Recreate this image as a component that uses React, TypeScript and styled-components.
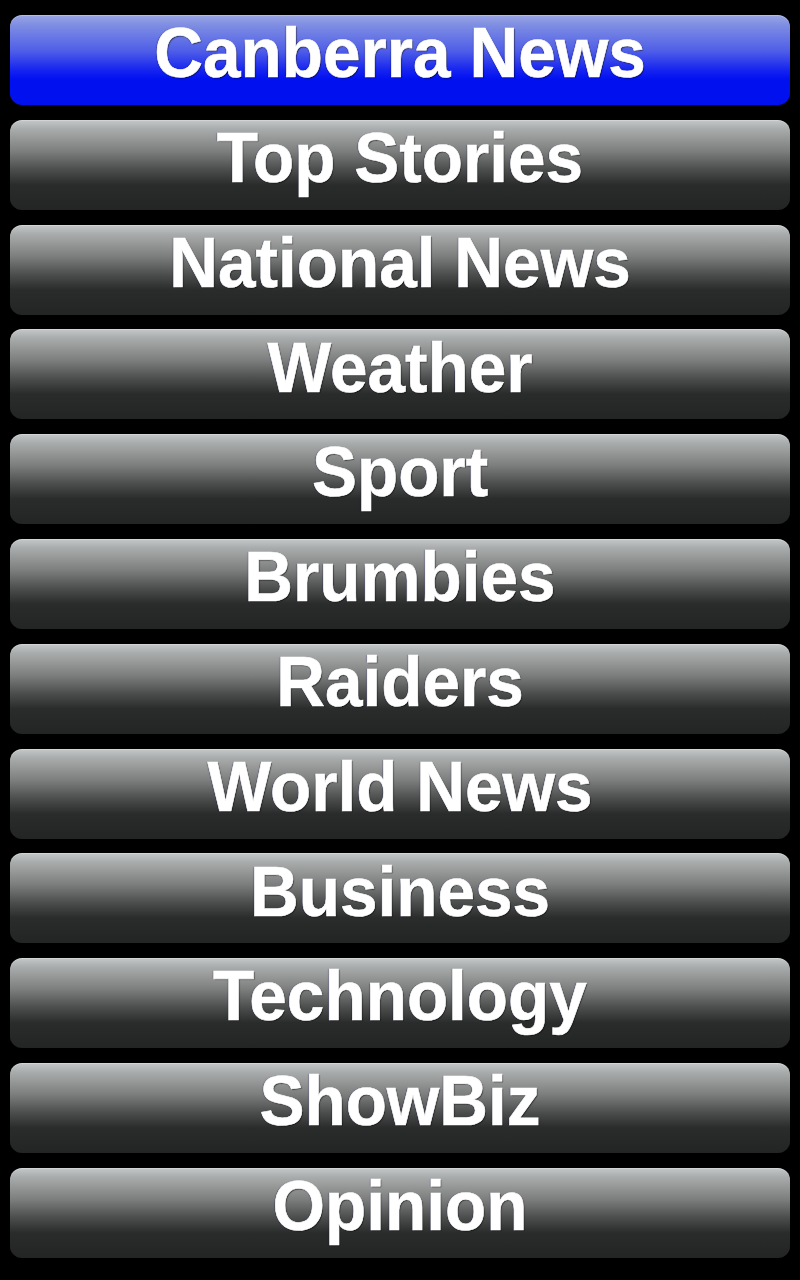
import React from "react";
import styled, { createGlobalStyle } from "styled-components";

const Global = createGlobalStyle`
  html, body {
    margin: 0;
    padding: 0;
    background: #000;
  }
  body {
    font-family: "Liberation Sans", Arial, sans-serif;
  }
`;

const Menu = styled.nav`
  display: grid;
  grid-template-columns: 1fr;
  grid-auto-rows: 90px;
  row-gap: 14.8px;
  padding: 15px 10px 22px 10px;
  background: #000;
  min-height: 1280px;
  box-sizing: border-box;
`;

const Button = styled.div<{ $active?: boolean }>`
  display: flex;
  align-items: center;
  justify-content: center;
  padding-bottom: 14px;
  box-sizing: border-box;
  border-radius: 12px;
  background: ${(p) =>
    p.$active
      ? "linear-gradient(to bottom, #9aa6e4 0%, #7d8ce2 12%, #4f5ee8 40%, #1422f0 62%, #0010f0 72%, #0010ee 100%)"
      : "linear-gradient(to bottom, #c4c8c8 0%, #a9acac 10%, #7c7e7e 35%, #4c4e4e 55%, #2a2c2c 72%, #232525 100%)"};
  box-shadow: inset 0 1px 0 rgba(255, 255, 255, 0.25);
`;

const Label = styled.span`
  color: #fff;
  font-family: "Liberation Sans", Arial, sans-serif;
  font-weight: 700;
  font-size: 67.5px;
  line-height: 1;
  white-space: nowrap;
  transform: scaleY(1.05);
  -webkit-text-stroke: 0.6px #fff;
  text-shadow: 1px 1px 1px rgba(0, 0, 0, 0.55), -1px 0 1px rgba(0, 0, 60, 0.35);
`;

const items = [
  "Canberra News",
  "Top Stories",
  "National News",
  "Weather",
  "Sport",
  "Brumbies",
  "Raiders",
  "World News",
  "Business",
  "Technology",
  "ShowBiz",
  "Opinion",
];

export default function App() {
  return (
    <>
      <Global />
      <Menu>
        {items.map((name, i) => (
          <Button key={name} $active={i === 0}>
            <Label>{name}</Label>
          </Button>
        ))}
      </Menu>
    </>
  );
}
